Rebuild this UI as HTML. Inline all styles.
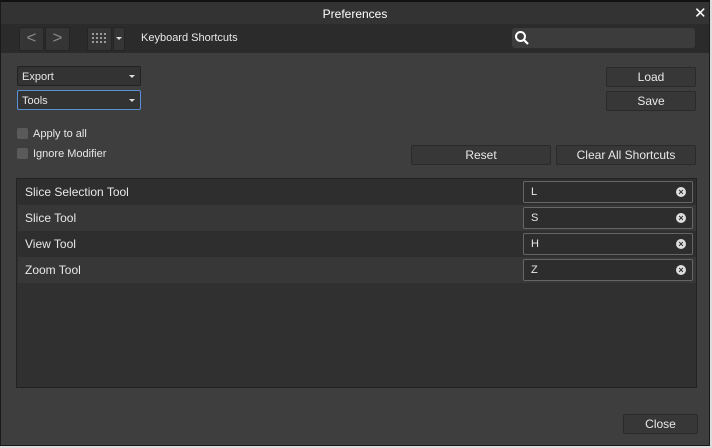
<!DOCTYPE html><html><head><style>
*{box-sizing:border-box;margin:0;padding:0}
body{width:712px;height:448px;background:#ddd;font-family:"Liberation Sans",sans-serif;font-size:11px;color:#e8e8e8;position:relative;overflow:hidden}
.win{position:absolute;left:0;top:0;width:710px;height:446px;background:#3e3e3e;border:1px solid #1a1a1a;border-top:2px solid #111}
.a{position:absolute}
.btn{position:absolute;background:#373737;border:1px solid #2a2a2a;border-radius:2px;text-align:center;line-height:18px;font-size:12px}
.dd{position:absolute;background:#333;border:1px solid #222;border-radius:2px;padding-left:4px;line-height:20px;font-size:11px}
.dd:after{content:"";position:absolute;right:5px;top:8px;border:3px solid transparent;border-top:3px solid #ddd}
.cb{position:absolute;width:11px;height:11px;background:#5a5a5a;border-radius:2px}
.row{position:absolute;left:1px;width:678px;height:26px;line-height:26px;padding-left:7px;font-size:12px}
.sc{position:absolute;left:505px;width:170px;height:22px;background:#2d2d2d;border:1px solid #666;border-radius:2px;line-height:20px;padding-left:7px;font-size:11px;top:2px}
.x{position:absolute;right:6px;top:5px;width:10px;height:10px;border-radius:50%;background:#ddd;color:#2d2d2d;font-size:9px;line-height:10px;text-align:center;font-weight:bold;padding:0}
</style></head><body>
<div class="win">
<div class="a" style="left:0;top:0;width:708px;height:22px;background:#333"></div>
<div class="a" style="left:0;top:5px;width:708px;text-align:center;font-size:12px;color:#fff">Preferences</div>
<div class="a" style="left:693px;top:2px;font-size:15px;color:#fff">✕</div>
<div class="a" style="left:0;top:22px;width:708px;height:29px;background:#2b2b2b"></div>
<div class="a" style="left:18px;top:25px;width:25px;height:24px;background:#353535;border:1px solid #252525;border-radius:2px;color:#888;font-size:17px;text-align:center;line-height:20px">&lt;</div>
<div class="a" style="left:44px;top:25px;width:25px;height:24px;background:#353535;border:1px solid #252525;border-radius:2px;color:#888;font-size:17px;text-align:center;line-height:20px">&gt;</div>
<div class="a" style="left:86px;top:25px;width:25px;height:24px;background:#353535;border:1px solid #252525;border-radius:2px"></div>
<svg class="a" style="left:91px;top:31px" width="16" height="12"><g fill="#999"><rect x="0" y="0" width="2" height="2"/><rect x="4" y="0" width="2" height="2"/><rect x="8" y="0" width="2" height="2"/><rect x="12" y="0" width="2" height="2"/><rect x="0" y="4" width="2" height="2"/><rect x="4" y="4" width="2" height="2"/><rect x="8" y="4" width="2" height="2"/><rect x="12" y="4" width="2" height="2"/><rect x="0" y="8" width="2" height="2"/><rect x="4" y="8" width="2" height="2"/><rect x="8" y="8" width="2" height="2"/><rect x="12" y="8" width="2" height="2"/></g></svg>
<div class="a" style="left:112px;top:25px;width:12px;height:24px;background:#353535;border:1px solid #252525;border-radius:2px"></div>
<div class="a" style="left:115px;top:35px;border:3px solid transparent;border-top:3px solid #ddd"></div>
<div class="a" style="left:140px;top:30px;font-size:11px">Keyboard Shortcuts</div>
<div class="a" style="left:511px;top:26px;width:183px;height:20px;background:#3c3c3c;border-radius:3px"></div>
<svg class="a" style="left:513px;top:27px" width="16" height="18"><circle cx="6.5" cy="7.5" r="4.5" fill="none" stroke="#fff" stroke-width="2"/><line x1="10" y1="11" x2="14" y2="15" stroke="#fff" stroke-width="2.2"/></svg>
<div class="dd" style="left:16px;top:64px;width:124px;height:20px">Export</div>
<div class="dd" style="left:16px;top:88px;width:124px;height:20px;border-color:#5b8fd3">Tools</div>
<div class="cb" style="left:16px;top:126px"></div><div class="a" style="left:32px;top:126px">Apply to all</div>
<div class="cb" style="left:16px;top:146px"></div><div class="a" style="left:32px;top:146px">Ignore Modifier</div>
<div class="btn" style="left:605px;top:65px;width:90px;height:20px">Load</div>
<div class="btn" style="left:605px;top:89px;width:90px;height:20px">Save</div>
<div class="btn" style="left:410px;top:143px;width:140px;height:20px">Reset</div>
<div class="btn" style="left:555px;top:143px;width:140px;height:20px">Clear All Shortcuts</div>
<div class="a" style="left:15px;top:176px;width:681px;height:210px;background:#303030;border:1px solid #222">
<div class="row" style="top:0;background:#2e2e2e">Slice Selection Tool<div class="sc">L<div class="x">×</div></div></div>
<div class="row" style="top:26px;background:#373737">Slice Tool<div class="sc">S<div class="x">×</div></div></div>
<div class="row" style="top:52px;background:#2e2e2e">View Tool<div class="sc">H<div class="x">×</div></div></div>
<div class="row" style="top:78px;background:#373737">Zoom Tool<div class="sc">Z<div class="x">×</div></div></div>
</div>
<div class="btn" style="left:622px;top:412px;width:75px;height:20px">Close</div>
</div>
</body></html>
